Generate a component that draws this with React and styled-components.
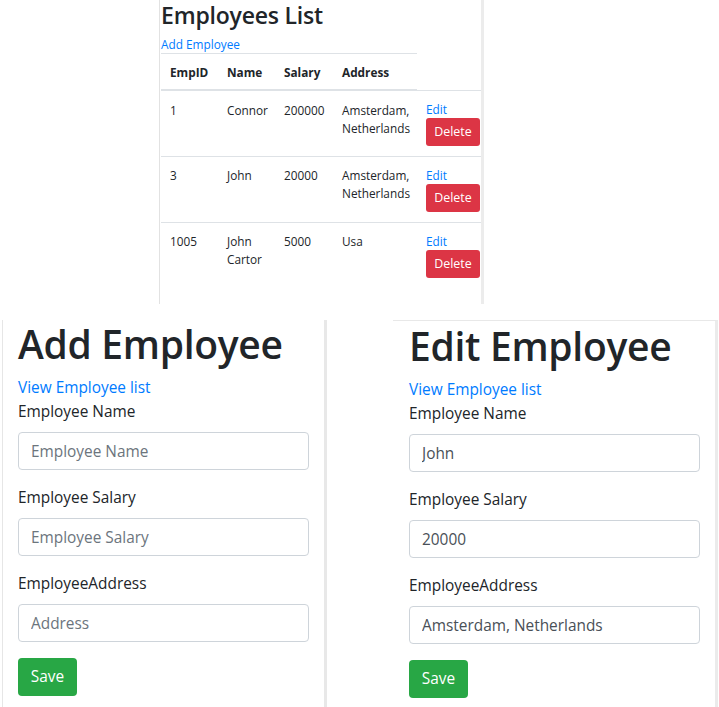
import React from "react";
import styled, { createGlobalStyle } from "styled-components";

const Global = createGlobalStyle`
  html, body { margin: 0; padding: 0; background: #fff; }
  body { font-family: "Open Sans", "Noto Sans", sans-serif; color: #212529; }
  * { box-sizing: border-box; }
`;

const Page = styled.div`
  width: 719px;
  height: 707px;
  overflow: hidden;
  display: flex;
  flex-direction: column;
  background: #fff;
`;

const TopRow = styled.div`
  height: 320px;
  display: flex;
  align-items: flex-start;
`;

const ListShot = styled.section`
  margin-left: 159px;
  width: 325px;
  height: 304px;
  border-left: 1px solid #e2e2e2;
  border-right: 3px solid #ececec;
  padding: 1px 0 0 1px;
  overflow: hidden;
  font-size: 11.8px;
  line-height: 18px;
`;

const ListTitle = styled.h2`
  margin: 0 0 5px;
  font-size: 23px;
  font-weight: 600;
  line-height: 29px;
  letter-spacing: -0.2px;
`;

const SmallLink = styled.a`
  display: block;
  color: #007bff;
  text-decoration: none;
  font-size: 11.8px;
  line-height: 18px;
`;

const Table = styled.table`
  border-collapse: collapse;
  table-layout: fixed;
  width: 328px;
`;

const Th = styled.th`
  text-align: left;
  font-weight: 700;
  padding: 9px 9px 8px;
  border-top: 1px solid #dee2e6;
  border-bottom: 2px solid #dee2e6;
  vertical-align: bottom;
`;

const Td = styled.td`
  padding: 9.5px 9px;
  border-top: 1px solid #dee2e6;
  vertical-align: top;
`;

const EditLink = styled.a`
  display: block;
  color: #007bff;
  text-decoration: none;
`;

const SmallDelete = styled.button`
  display: block;
  border: 0;
  border-radius: 3px;
  background: #dc3545;
  color: #fff;
  font-family: inherit;
  font-size: 12.4px;
  line-height: 18px;
  padding: 5px 0;
  width: 54px;
  text-align: center;
`;

const BottomRow = styled.div`
  flex: 1;
  display: flex;
  align-items: stretch;
`;

const AddShot = styled.section`
  margin-left: 2px;
  width: 325px;
  border-left: 1px solid #e6e6e6;
  border-right: 3px solid #e8e8e8;
  padding: 0 15px;
`;

const EditOuter = styled.div`
  flex: 1;
  padding-left: 66px;
  display: flex;
`;

const EditShot = styled.section`
  flex: 1;
  border-top: 1px solid #e8e8e8;
  border-right: 3px solid #ebebeb;
  margin-right: 1px;
  padding: 1px 15px 0 16px;
`;

const BigTitle = styled.h1`
  margin: 0 0 8px;
  font-size: 39px;
  font-weight: 600;
  line-height: 48px;
  letter-spacing: -0.3px;
`;

const NavLink = styled.a`
  display: block;
  color: #007bff;
  text-decoration: none;
  font-size: 15.4px;
  line-height: 24px;
`;

const Group = styled.div`
  margin-bottom: 16px;
`;

const Label = styled.label`
  display: block;
  font-size: 15.4px;
  line-height: 24px;
  margin-bottom: 8px;
`;

const Input = styled.input`
  display: block;
  width: 100%;
  height: 38px;
  padding: 6px 12px;
  font-family: inherit;
  font-size: 15.4px;
  line-height: 24px;
  color: #495057;
  background: #fff;
  border: 1px solid #ced4da;
  border-radius: 4px;
  outline: none;
  &::placeholder { color: #6c757d; opacity: 1; }
`;

const SaveButton = styled.button`
  display: block;
  height: 38px;
  width: 59px;
  padding: 6px 0;
  border: 0;
  border-radius: 4px;
  background: #28a745;
  color: #fff;
  font-family: inherit;
  font-size: 15.4px;
  line-height: 24px;
`;

const rows = [
  { id: "1", name: "Connor", salary: "200000", address: "Amsterdam, Netherlands" },
  { id: "3", name: "John", salary: "20000", address: "Amsterdam, Netherlands" },
  { id: "1005", name: "John Cartor", salary: "5000", address: "Usa" },
];

function EmployeeForm({ values }) {
  return (
    <>
      <Group>
        <Label>Employee Name</Label>
        <Input placeholder="Employee Name" defaultValue={values ? values.name : undefined} />
      </Group>
      <Group>
        <Label>Employee Salary</Label>
        <Input placeholder="Employee Salary" defaultValue={values ? values.salary : undefined} />
      </Group>
      <Group>
        <Label>EmployeeAddress</Label>
        <Input placeholder="Address" defaultValue={values ? values.address : undefined} />
      </Group>
      <SaveButton>Save</SaveButton>
    </>
  );
}

export default function App() {
  return (
    <Page>
      <Global />
      <TopRow>
        <ListShot>
          <ListTitle>Employees List</ListTitle>
          <SmallLink href="#">Add Employee</SmallLink>
          <Table>
            <colgroup>
              <col style={{ width: 57 }} />
              <col style={{ width: 57 }} />
              <col style={{ width: 58 }} />
              <col style={{ width: 84 }} />
              <col style={{ width: 72 }} />
            </colgroup>
            <thead>
              <tr>
                <Th>EmpID</Th>
                <Th>Name</Th>
                <Th>Salary</Th>
                <Th>Address</Th>
              </tr>
            </thead>
            <tbody>
              {rows.map((r) => (
                <tr key={r.id}>
                  <Td>{r.id}</Td>
                  <Td>{r.name}</Td>
                  <Td>{r.salary}</Td>
                  <Td>{r.address}</Td>
                  <Td>
                    <EditLink href="#">Edit</EditLink>
                    <SmallDelete>Delete</SmallDelete>
                  </Td>
                </tr>
              ))}
            </tbody>
          </Table>
        </ListShot>
      </TopRow>
      <BottomRow>
        <AddShot>
          <BigTitle>Add Employee</BigTitle>
          <NavLink href="#">View Employee list</NavLink>
          <EmployeeForm />
        </AddShot>
        <EditOuter>
          <EditShot>
            <BigTitle>Edit Employee</BigTitle>
            <NavLink href="#">View Employee list</NavLink>
            <EmployeeForm values={{ name: "John", salary: "20000", address: "Amsterdam, Netherlands" }} />
          </EditShot>
        </EditOuter>
      </BottomRow>
    </Page>
  );
}
